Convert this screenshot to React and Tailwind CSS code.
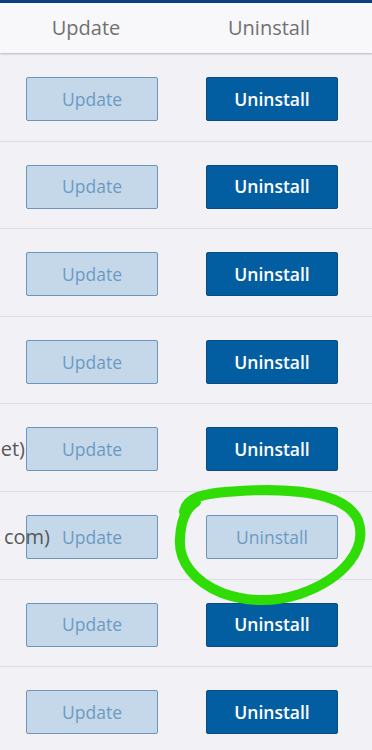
import React from "react";

const rows = [
  { label: null, disabled: false },
  { label: null, disabled: false },
  { label: null, disabled: false },
  { label: null, disabled: false },
  { label: "et)", labelRight: "right-[347px]", disabled: false },
  { label: " com)", labelRight: "right-[322px]", disabled: true },
  { label: null, disabled: false },
  { label: null, disabled: false },
];

const light =
  "h-[44px] w-[132px] rounded-[2px] border border-[#6d95bb] bg-[#c4d8ea] text-[17.5px] text-[#6d9ac2]";
const dark =
  "h-[44px] w-[132px] rounded-[2px] border border-[#0b4a82] bg-[#035ea1] text-[17.5px] font-semibold text-white";

function Row({ row }) {
  return (
    <div className="relative flex h-[87.6px] shrink-0 items-start gap-[48px] border-b border-[#dcdce2] pl-[26px] pt-[23px]">
      <button className={light}>Update</button>
      <button className={row.disabled ? light : dark}>Uninstall</button>
      {row.label && (
        <span
          className={`absolute top-[31px] ${row.labelRight} whitespace-pre text-[20px] leading-[28px] text-[#575757]`}
        >
          {row.label}
        </span>
      )}
    </div>
  );
}

export default function App() {
  return (
    <div
      className="relative flex h-[750px] w-[372px] flex-col overflow-hidden bg-[#f2f2f6]"
      style={{ fontFamily: '"Open Sans", "Noto Sans", sans-serif' }}
    >
      <div className="h-[3px] shrink-0 bg-[#0b3f82]" />
      <div className="relative z-10 flex h-[50px] shrink-0 items-center bg-[#f8f8fa] shadow-[0_1px_2px_rgba(0,0,0,0.25)]">
        <div className="w-[172px] text-center text-[20px] text-[#707070]">Update</div>
        <div className="w-[194px] text-center text-[20px] text-[#707070]">Uninstall</div>
      </div>
      <div className="flex flex-col pt-[1px]">
        {rows.map((r, i) => (
          <Row key={i} row={r} />
        ))}
      </div>
      <svg
        className="pointer-events-none absolute left-0 top-0"
        width="372"
        height="750"
        viewBox="0 0 372 750"
      >
        <path
          d="M 184 512 C 186 498, 200 493, 240 491 C 290 488, 345 492, 358 520 C 368 548, 345 578, 300 594 C 275 602, 250 603, 222 593 C 195 582, 178 562, 180 538 C 181 520, 186 508, 196 502"
          fill="none"
          stroke="#2fdc05"
          strokeWidth="10"
          strokeLinecap="round"
          strokeLinejoin="round"
        />
      </svg>
    </div>
  );
}
